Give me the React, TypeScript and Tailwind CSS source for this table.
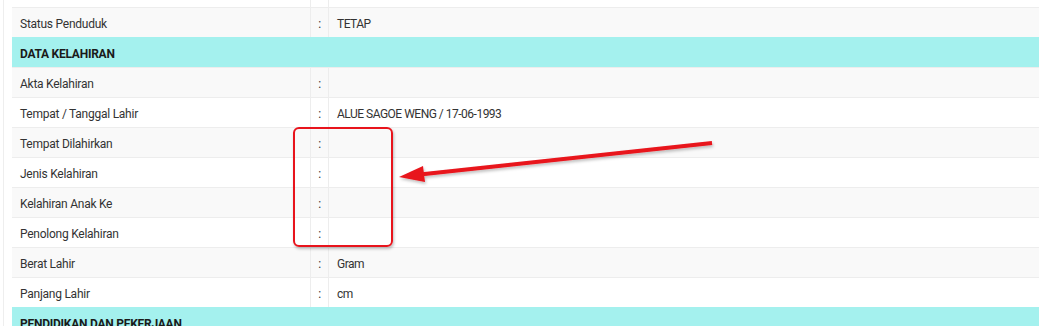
import React from 'react';

type Row =
    | { kind: 'section'; title: string }
    | { kind: 'field'; label: string; value?: string };

const rows: Row[] = [
    { kind: 'field', label: 'Status Penduduk', value: 'TETAP' },
    { kind: 'section', title: 'DATA KELAHIRAN' },
    { kind: 'field', label: 'Akta Kelahiran' },
    { kind: 'field', label: 'Tempat / Tanggal Lahir', value: 'ALUE SAGOE WENG / 17-06-1993' },
    { kind: 'field', label: 'Tempat Dilahirkan' },
    { kind: 'field', label: 'Jenis Kelahiran' },
    { kind: 'field', label: 'Kelahiran Anak Ke' },
    { kind: 'field', label: 'Penolong Kelahiran' },
    { kind: 'field', label: 'Berat Lahir', value: 'Gram' },
    { kind: 'field', label: 'Panjang Lahir', value: 'cm' },
    { kind: 'section', title: 'PENDIDIKAN DAN PEKERJAAN' },
];

function FieldRow({ label, value, striped }: { label: string; value?: string; striped: boolean }) {
    return (
        <div
            className={`grid grid-cols-[299px_18px_1fr] h-[30px] border-t border-[#ededed] ${
                striped ? 'bg-[#f9f9f9]' : 'bg-white'
            }`}
        >
            <div className="flex items-center pl-2 pt-[2px] border-r border-[#ededed]">{label}</div>
            <div className="flex items-center justify-center pt-[2px] border-r border-[#ededed]">:</div>
            <div className="flex items-center pl-2 pt-[2px] tracking-[-0.5px]">{value}</div>
        </div>
    );
}

function SectionRow({ title }: { title: string }) {
    return (
        <div className="flex items-center h-[30px] pl-2 pt-[3px] bg-[#a4f1ee] font-bold text-[#1a1a1a]">
            {title}
        </div>
    );
}

export default function App() {
    let fieldIndex = 0;
    return (
        <div className="relative w-[1040px] h-[326px] overflow-hidden bg-white text-[12px] tracking-[-0.25px] text-[#333] font-['Roboto',sans-serif]">
            <div className="absolute left-[3px] top-0 bottom-0 w-px bg-[#eeeeee]" />
            <div className="ml-[12px] w-[1027px] -mt-[23px]">
                {/* partial row above */}
                <div className="grid grid-cols-[299px_18px_1fr] h-[30px] bg-white">
                    <div className="border-r border-[#ededed]" />
                    <div className="border-r border-[#ededed]" />
                    <div />
                </div>
                {rows.map((row, i) => {
                    if (row.kind === 'section') {
                        fieldIndex = 0;
                        return <SectionRow key={i} title={row.title} />;
                    }
                    const striped = fieldIndex % 2 === 0;
                    fieldIndex++;
                    return <FieldRow key={i} label={row.label} value={row.value} striped={striped} />;
                })}
            </div>

            {/* highlight box around empty fields */}
            <div className="absolute left-[293px] top-[127px] w-[100px] h-[120px] rounded-[6px] border-2 border-[#e8141c] shadow-[1px_2px_3px_rgba(0,0,0,0.25)]" />

            {/* pointer arrow */}
            <svg className="absolute left-0 top-0" width="1040" height="326" viewBox="0 0 1040 326">
                <defs>
                    <filter id="arrowShadow" x="-10%" y="-50%" width="120%" height="200%">
                        <feDropShadow dx="1" dy="2" stdDeviation="1.5" floodColor="#000" floodOpacity="0.25" />
                    </filter>
                </defs>
                <g filter="url(#arrowShadow)" fill="#e8141c" stroke="#e8141c">
                    <line x1="712" y1="143" x2="420" y2="174.5" strokeWidth="4" strokeLinecap="butt" />
                    <polygon points="399,177 423,166 425,182" strokeWidth="0" />
                </g>
            </svg>
        </div>
    );
}
